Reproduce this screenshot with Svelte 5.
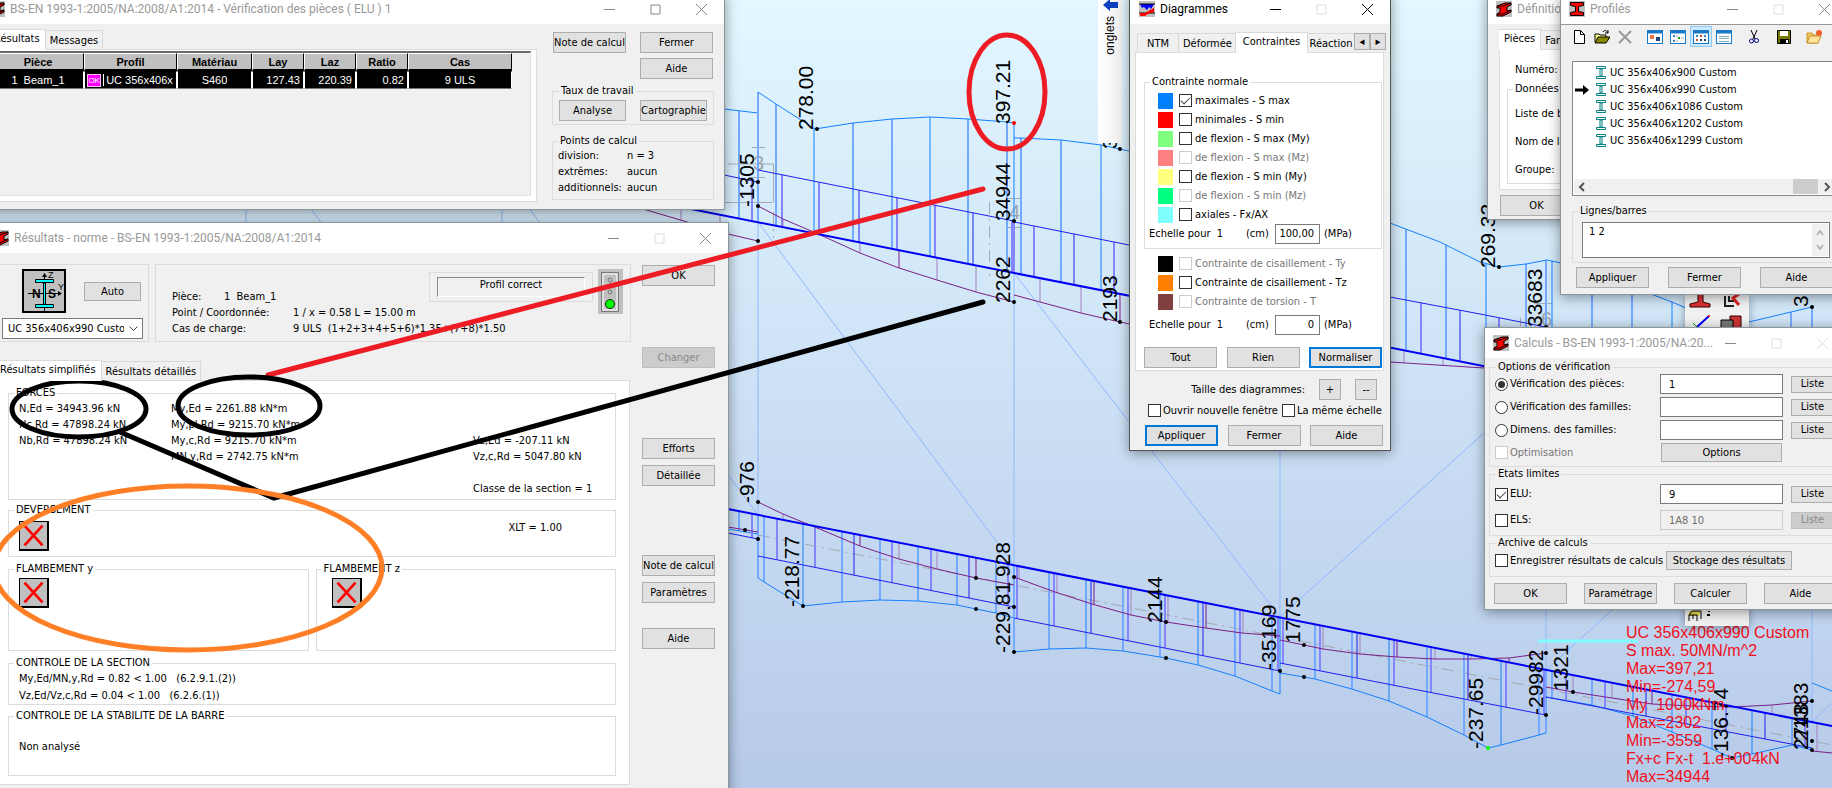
<script lang="ts">
	type Point = [number, number];
	type Curve = { kind: string; chord: 'top' | 'bottom'; points: Point[]; ribs: number[] };

	// s = contrainte maximale, n = effort axial, m = moment
	const curves: Curve[] = [
		{ kind: 's', chord: 'top', points: [[724, 109], [758, 113]], ribs: [739] },
		{ kind: 's', chord: 'top', points: [[758, 92], [776, 104], [815, 129], [853, 123], [892, 119], [930, 117], [968, 119], [1007, 122], [1014, 123]], ribs: [758, 776, 814, 853, 892, 930, 968, 1007, 1014] },
		{ kind: 's', chord: 'top', points: [[1014, 138], [1021, 138], [1061, 140], [1101, 145], [1129, 151], [1260, 182], [1390, 223], [1440, 242], [1480, 262], [1499, 267], [1526, 264], [1547, 260], [1561, 263], [1651, 294], [1672, 302], [1686, 308]], ribs: [1021, 1061, 1101, 1406, 1446, 1486, 1526, 1546, 1552, 1592, 1632, 1672] },
		{ kind: 's', chord: 'top', points: [[1749, 322], [1791, 312], [1812, 307]], ribs: [1791, 1812] },
		{ kind: 'n', chord: 'top', points: [[724, 175], [758, 182]], ribs: [752] },
		{ kind: 'n', chord: 'top', points: [[758, 170], [1014, 221]], ribs: [782, 819, 859, 897, 935, 973, 1012] },
		{ kind: 'n', chord: 'top', points: [[1014, 222], [1129, 245], [1390, 297], [1480, 314], [1546, 327]], ribs: [1014, 1034, 1074, 1114, 1421, 1460, 1499, 1540] },
		{ kind: 'm', chord: 'top', points: [[643, 209], [728, 234], [758, 241]], ribs: [681, 720] },
		{ kind: 'm', chord: 'top', points: [[758, 206], [783, 219], [816, 233], [860, 253], [899, 268], [937, 280], [976, 292], [1014, 302]], ribs: [783, 860, 899, 937, 976] },
		{ kind: 'm', chord: 'top', points: [[1014, 295], [1040, 302], [1081, 313], [1120, 322], [1160, 330], [1390, 362], [1484, 368]], ribs: [1040, 1081, 1120, 1404, 1443] },
		{ kind: 's', chord: 'bottom', points: [[728, 529], [758, 534]], ribs: [739] },
		{ kind: 's', chord: 'bottom', points: [[758, 578], [764, 582], [803, 606], [842, 602], [880, 600], [918, 601], [957, 605], [976, 609], [996, 613], [1014, 618]], ribs: [758, 764, 803, 842, 880, 918, 957, 996] },
		{ kind: 's', chord: 'bottom', points: [[1014, 652], [1049, 649], [1086, 648], [1123, 651], [1166, 658], [1198, 665], [1235, 676], [1272, 691], [1280, 694]], ribs: [1014, 1049, 1086, 1123, 1160, 1198, 1235, 1272, 1280] },
		{ kind: 's', chord: 'bottom', points: [[1280, 673], [1304, 677], [1315, 679], [1352, 689], [1389, 701], [1427, 717], [1464, 735], [1488, 748], [1501, 745], [1539, 735], [1546, 733]], ribs: [1315, 1352, 1389, 1427, 1464, 1501, 1539, 1546] },
		{ kind: 's', chord: 'bottom', points: [[1546, 697], [1552, 698], [1592, 705], [1633, 716], [1672, 732], [1712, 749], [1732, 758], [1752, 754], [1792, 745], [1812, 750]], ribs: [1552, 1592, 1633, 1672, 1712, 1752, 1792] },
		{ kind: 's', chord: 'bottom', points: [[1812, 683], [1832, 691]], ribs: [] },
		{ kind: 'n', chord: 'bottom', points: [[728, 533], [758, 539]], ribs: [752] },
		{ kind: 'n', chord: 'bottom', points: [[758, 556], [1014, 607]], ribs: [777, 815, 854, 892, 931, 969, 1008] },
		{ kind: 'n', chord: 'bottom', points: [[1014, 618], [1280, 671]], ribs: [1017, 1054, 1091, 1128, 1165, 1203, 1240, 1278] },
		{ kind: 'n', chord: 'bottom', points: [[1280, 663], [1546, 715]], ribs: [1283, 1320, 1357, 1394, 1431, 1468, 1506, 1544] },
		{ kind: 'n', chord: 'bottom', points: [[1546, 697], [1812, 748]], ribs: [1566, 1605, 1646, 1686, 1726, 1765, 1805] },
		{ kind: 'm', chord: 'bottom', points: [[728, 527], [758, 532]], ribs: [] },
		{ kind: 'm', chord: 'bottom', points: [[758, 502], [783, 514], [822, 530], [860, 546], [899, 559], [937, 569], [976, 578], [1014, 585]], ribs: [783, 822, 860, 899, 937, 976] },
		{ kind: 'm', chord: 'bottom', points: [[1014, 577], [1055, 592], [1092, 604], [1131, 615], [1166, 622], [1206, 628], [1242, 633], [1280, 636]], ribs: [1019, 1057, 1094, 1131, 1168, 1206, 1243] },
		{ kind: 'm', chord: 'bottom', points: [[1280, 640], [1304, 645], [1323, 649], [1360, 654], [1397, 657], [1435, 659], [1471, 659], [1509, 658], [1546, 653]], ribs: [1323, 1360, 1397, 1435, 1471, 1509] },
		{ kind: 'm', chord: 'bottom', points: [[1546, 687], [1573, 692], [1612, 698], [1652, 704], [1692, 706], [1732, 707], [1772, 705], [1812, 701]], ribs: [1573, 1612, 1652, 1692, 1772] },
		{ kind: 'm', chord: 'bottom', points: [[1812, 751], [1832, 753]], ribs: [1817] }
	];

	const chordY = (chord: string, x: number) =>
		chord === 'top' ? 222 + (x - 758) * 0.198 : 515 + (x - 758) * 0.1964;

	function curveY(points: Point[], x: number) {
		for (let i = 1; i < points.length; i++) {
			const [x0, y0] = points[i - 1];
			const [x1, y1] = points[i];
			if (x <= x1) return y0 + ((x - x0) / (x1 - x0)) * (y1 - y0);
		}
		return points[points.length - 1][1];
	}

	const bracing = [
		[246, 200, 246, 230], [502, 172, 502, 230], [300, 195, 340, 247], [502, 172, 758, 515],
		[758, 222, 758, 515], [758, 222, 1014, 565], [1014, 273, 1014, 565], [1014, 273, 1280, 617],
		[1280, 325, 1280, 617], [1280, 617, 1546, 377], [1546, 377, 1546, 670], [1546, 670, 1812, 430],
		[1812, 430, 1812, 722], [1812, 722, 1832, 703]
	];

	const dots: Point[] = [
		[817, 129], [758, 182], [758, 206], [758, 241], [1014, 221], [1014, 302], [1120, 149], [1120, 322],
		[1499, 267], [1546, 327], [1812, 307], [758, 502], [745, 530], [758, 539], [803, 606], [976, 578],
		[976, 609], [1014, 577], [1014, 607], [1014, 652], [1166, 622], [1166, 658], [1280, 671], [1304, 645],
		[1304, 677], [1546, 653], [1546, 715], [1573, 692], [1732, 758], [1812, 701], [1812, 741], [1812, 750]
	];

	const values: [string, number, number][] = [
		['278.00', 813, 130], ['397.21', 1010, 124], ['34944', 1010, 221], ['2262', 1010, 303],
		['2193', 1117, 322], ['3', 1117, 149], ['-1305', 754, 207], ['-976', 754, 503],
		['-218.77', 799, 607], ['-229.81', 1010, 653], ['928', 1010, 577], ['2144', 1162, 623],
		['-35169', 1276, 670], ['1775', 1300, 643], ['-29982', 1543, 715], ['1321', 1568, 691],
		['-237.65', 1483, 749], ['-136.74', 1728, 759], ['21383', 1808, 741], ['2748', 1808, 750],
		['269.32', 1495, 268], ['33683', 1542, 327], ['3', 1808, 307]
	];

	const legend = [
		'UC 356x406x990 Custom', 'S max. 50MN/m^2', 'Max=397,21', 'Min=-274,59', 'My  1000kNm',
		'Max=2302', 'Min=-3559', 'Fx+c Fx-t  1.e+004kN', 'Max=34944'
	];

	const columns = ['Pièce', 'Profil', 'Matériau', 'Lay', 'Laz', 'Ratio', 'Cas'];

	const forces = [
		['N,Ed = 34943.96 kN', 'My,Ed = 2261.88 kN*m', ''],
		['Nc,Rd = 47898.24 kN', 'My,pl,Rd = 9215.70 kN*m', ''],
		['Nb,Rd = 47898.24 kN', 'My,c,Rd = 9215.70 kN*m', 'Vz,Ed = -207.11 kN'],
		['', 'MN,y,Rd = 2742.75 kN*m', 'Vz,c,Rd = 5047.80 kN'],
		['', '', ''],
		['', '', 'Classe de la section = 1']
	];

	const normal = [
		{ color: '#0080ff', label: 'maximales - S max', checked: true, disabled: false },
		{ color: '#ff0000', label: 'minimales - S min', checked: false, disabled: false },
		{ color: '#80ff80', label: 'de flexion - S max (My)', checked: false, disabled: false },
		{ color: '#ff8080', label: 'de flexion - S max (Mz)', checked: false, disabled: true },
		{ color: '#ffff80', label: 'de flexion - S min (My)', checked: false, disabled: false },
		{ color: '#00ff80', label: 'de flexion - S min (Mz)', checked: false, disabled: true },
		{ color: '#80ffff', label: 'axiales - Fx/AX', checked: false, disabled: false }
	];
	const shear = [
		{ color: '#000000', label: 'Contrainte de cisaillement - Ty', checked: false, disabled: true },
		{ color: '#ff8000', label: 'Contrainte de cisaillement - Tz', checked: false, disabled: false },
		{ color: '#804040', label: 'Contrainte de torsion - T', checked: false, disabled: true }
	];

	const profiles = ['900', '990', '1086', '1202', '1299'];
	const targets = [
		{ label: 'Vérification des pièces:', value: '1' },
		{ label: 'Vérification des familles:', value: '' },
		{ label: 'Dimens. des familles:', value: '' }
	];
</script>

{#snippet beam()}
	<svg class="icon" viewBox="0 0 16 16" aria-hidden="true">
		<rect width="16" height="16" fill="#c0c0c0" />
		<path d="M1 5 9 2h6v2l-4 2v4l4-1v2l-8 4H1v-2l3-2V7L1 7z" fill="#f00" stroke="#000" />
		<path d="M1 5h6l8-3M1 13h6l8-4" fill="none" stroke="#000" />
	</svg>
{/snippet}

{#snippet isection()}
	<svg class="icon" viewBox="0 0 16 16" aria-hidden="true">
		<rect width="16" height="16" fill="#c0c0c0" />
		<path d="M1.500 1.500h13v3l-5 1v5l5 1v3h-13v-3l5-1v-5l-5-1z" fill="#f00" stroke="#000" />
	</svg>
{/snippet}

{#snippet diagramIcon()}
	<svg class="icon" viewBox="0 0 16 16" aria-hidden="true">
		<rect width="16" height="16" fill="#c0c0c0" />
		<path d="M1 3h14l-3 5-2-2-2 3-3-3-2 1z" fill="#00f" />
		<path d="M0 3h16M0 12h16" stroke="#000" />
		<path d="M1 15v-3h5l7-4 2-1v4l-6 2-3 2z" fill="#f00" />
	</svg>
{/snippet}

{#snippet titlebar(icon: any, title: string, look: string)}
	<header class="titlebar {look}">
		{@render icon()}
		<h2>{title}</h2>
		<button class="ctl" aria-label="Réduire"><svg viewBox="0 0 11 11"><path d="M0 5.500h11" /></svg></button>
		<button class="ctl max" aria-label="Agrandir"><svg viewBox="0 0 11 11"><path d="M1 1h9v9H1z" /></svg></button>
		<button class="ctl close" aria-label="Fermer la fenêtre"><svg viewBox="0 0 11 11"><path d="M0 0l11 11M11 0 0 11" /></svg></button>
	</header>
{/snippet}

{#snippet cross(label: string)}
	<button class="cross" aria-label={label}>
		<svg viewBox="0 0 30 30"><path d="M5 4l20 22M25 4 5 26" stroke="#f00" stroke-width="3" /></svg>
	</button>
{/snippet}

{#snippet stress(row: any)}
	<label class="stress" class:off={row.disabled}>
		<span class="swatch" style="background: {row.color}"></span>
		<input type="checkbox" checked={row.checked} disabled={row.disabled} />
		{row.label}
	</label>
{/snippet}

<main class="desktop">
	<svg class="scene" aria-hidden="true">
		<g class="brace">
			{#each bracing as [x1, y1, x2, y2]}
				<line {x1} {y1} {x2} {y2} />
			{/each}
		</g>
		<path class="axis" d="M728 164h45M773.500 164v38M720 202.500h53M752 147.500h13M752 177.500h13M1008 198.500h13M1008 227.500h13M1534 303.500h18M1520.500 318v8" />
		<path class="axis dashed" d="M773.500 212v26M989.500 202v74M758 535 1832 745" />
		<text class="node" x="753" y="170">3</text>
		<text class="node" x="1009" y="219">4</text>
		<text class="node" x="1541" y="326">6</text>
		{#each curves as curve}
			<g class={curve.kind}>
				{#each curve.ribs as x, i}
					<line class:pale={i % 3 !== 2} x1={x} x2={x} y1={chordY(curve.chord, x)} y2={curveY(curve.points, x)} />
				{/each}
				<polyline points={curve.points.map((p) => p.join(',')).join(' ')} />
			</g>
		{/each}
		<path class="chord" d="M600 191 1832 435M728 509 1832 726" />
		<path d="M1538 641h100" stroke="#7fffff" stroke-width="3" />
		{#each dots as [cx, cy]}
			<circle {cx} {cy} r="2" />
		{/each}
		<circle cx="1014" cy="123" r="2" fill="#f00" />
		<circle cx="1488" cy="748" r="2" fill="#0f0" />
		<g class="values">
			{#each values as [text, x, y]}
				<text transform="translate({x} {y}) rotate(-90)">{text}</text>
			{/each}
		</g>
	</svg>

	<div class="legend">
		{#each legend as line}<p>{line}</p>{/each}
	</div>

	<aside class="dock">
		<svg width="15" height="12" viewBox="0 0 15 12" aria-hidden="true"><path d="M0 5 7-1v3h8v6H7v3z" fill="#0a3fc0" /></svg>
		<span>onglets</span>
	</aside>

	<div class="palette">
		<svg width="64" height="34" viewBox="0 0 64 34" aria-hidden="true">
			<path d="M13 0h5v8l7 2v3H5v-3l8-2z" fill="#d33" stroke="#300" />
			<path d="M40 2v10h9M44 2v5h5" fill="none" stroke="#222" stroke-width="2" />
			<path d="M54 0l-6 4 6 7" fill="none" stroke="#d22" stroke-width="3" />
			<path d="M12 33l12-11" stroke="#00f" stroke-width="2" />
			<path d="M8 29l4 4" stroke="#090" />
			<circle cx="24" cy="22" r="1" fill="#f00" />
			<path d="M45 22h11v12H45z" fill="#c33" stroke="#300" />
			<path d="M36 26h12v8H36z" fill="#777" stroke="#000" />
		</svg>
		<svg class="last" width="64" height="16" viewBox="0 0 64 16" aria-hidden="true">
			<path d="M5 1h11l-2 5H3z" fill="#e8dc50" />
			<path d="M4 11V5h8v6M8 5v4M4 5l3-4h9v8" fill="none" stroke="#000" />
			<path d="M22 4h3v2h-3zM23 1h2v1h-2z" />
		</svg>
	</div>

	<section class="window verification">
		{@render titlebar(beam, 'BS-EN 1993-1:2005/NA:2008/A1:2014 - Vérification des pièces ( ELU ) 1', '')}
		<div class="body">
			<div class="left">
				<div class="tabs"><button class="tab on">Résultats</button><button class="tab">Messages</button></div>
				<div class="pane">
					<div class="sheet">
						<table>
							<thead><tr>{#each columns as column}<th>{column}</th>{/each}</tr></thead>
							<tbody>
								<tr>
									<td>1&nbsp; Beam_1</td>
									<td class="profile"><b>OK</b><span>UC 356x406x</span></td>
									<td>S460</td>
									<td class="num">127.43</td>
									<td class="num">220.39</td>
									<td class="num">0.82</td>
									<td>9 ULS</td>
								</tr>
							</tbody>
						</table>
					</div>
				</div>
			</div>
			<div class="right">
				<div class="pair"><button>Note de calcul</button><button>Fermer</button></div>
				<div class="pair second"><button>Aide</button></div>
				<fieldset class="rate">
					<legend>Taux de travail</legend>
					<button>Analyse</button><button>Cartographie</button>
				</fieldset>
				<fieldset class="stations">
					<legend>Points de calcul</legend>
					<span>division:</span><span>n = 3</span>
					<span>extrêmes:</span><span>aucun</span>
					<span>additionnels:</span><span>aucun</span>
				</fieldset>
			</div>
		</div>
	</section>

	<section class="window results">
		{@render titlebar(beam, 'Résultats - norme - BS-EN 1993-1:2005/NA:2008/A1:2014', 'nomax')}
		<div class="body">
			<div class="content">
				<div class="summary">
					<div class="box section">
						<svg width="44" height="44" viewBox="0 0 44 44" aria-hidden="true">
							<rect x="1" y="1" width="42" height="42" fill="#c0c0c0" stroke="#000" stroke-width="2" />
							<path d="M6 24.500h33M22.500 5v37" stroke="#000" />
							<path d="M13.500 10.500h18v3h-18zM13.500 35.500h18v3h-18zM21.500 14h2v21h-2z" fill="#0ff" stroke="#000" />
							<path d="M20 8l2.500-4L25 8zM36 22l4 2.500-4 2.500z" />
							<text x="10" y="29">N</text><text x="26" y="29">S</text>
							<text class="small" x="26" y="9">Z</text><text class="small" x="36" y="21">Y</text>
						</svg>
						<button>Auto</button>
						<select aria-label="Profil"><option>UC 356x406x990 Custom</option></select>
					</div>
					<div class="box piece">
						<dl>
							<dt>Pièce:</dt><dd class="name">1&nbsp; Beam_1</dd>
							<dt>Point / Coordonnée:</dt><dd>1 / x = 0.58 L = 15.00 m</dd>
							<dt>Cas de charge:</dt><dd>9 ULS&nbsp; (1+2+3+4+5+6)*1.35+(7+8)*1.50</dd>
						</dl>
						<div class="verdict"><output>Profil correct</output></div>
						<svg width="25" height="45" viewBox="0 0 25 45" aria-hidden="true">
							<rect width="25" height="45" fill="#c0c0c0" />
							<path d="M3.500 3.500h17v39h-17z" fill="none" stroke="#777" />
							<path d="M5 5h14v36H5z" fill="#c0c0c0" stroke="#fff" />
							<circle cx="12" cy="11" r="2" fill="none" stroke="#777" />
							<circle cx="12" cy="23" r="2" fill="none" stroke="#777" />
							<circle cx="12" cy="35" r="4.500" fill="#0f0" stroke="#030" />
						</svg>
					</div>
				</div>
				<div class="tabs"><button class="tab on">Résultats simplifiés</button><button class="tab">Résultats détaillés</button></div>
				<div class="pane">
					<fieldset class="forces">
						<legend>FORCES</legend>
						{#each forces as row}{#each row as cell}<span>{cell}</span>{/each}{/each}
					</fieldset>
					<fieldset class="lateral">
						<legend>DEVERSEMENT</legend>
						{@render cross('Déversement')}<span>XLT = 1.00</span>
					</fieldset>
					<div class="buckling">
						<fieldset><legend>FLAMBEMENT y</legend>{@render cross('Flambement y')}</fieldset>
						<fieldset class="weak"><legend>FLAMBEMENT z</legend>{@render cross('Flambement z')}</fieldset>
					</div>
					<fieldset class="control">
						<legend>CONTROLE DE LA SECTION</legend>
						<p>My,Ed/MN,y,Rd = 0.82 &lt; 1.00 &nbsp; (6.2.9.1.(2))</p>
						<p>Vz,Ed/Vz,c,Rd = 0.04 &lt; 1.00 &nbsp; (6.2.6.(1))</p>
					</fieldset>
					<fieldset class="stability">
						<legend>CONTROLE DE LA STABILITE DE LA BARRE</legend>
						<p>Non analysé</p>
					</fieldset>
				</div>
			</div>
			<div class="actions">
				<button>OK</button><button disabled>Changer</button><button>Efforts</button><button>Détaillée</button>
				<button>Note de calcul</button><button>Paramètres</button><button>Aide</button>
			</div>
		</div>
	</section>

	<section class="window diagrams">
		{@render titlebar(diagramIcon, 'Diagrammes', 'active nomax')}
		<div class="tabs">
			<button class="tab">NTM</button><button class="tab">Déformée</button><button class="tab on">Contraintes</button><button class="tab last">Réaction</button>
			<button class="scroll" aria-label="Onglet précédent">◂</button><button class="scroll" aria-label="Onglet suivant">▸</button>
		</div>
		<div class="pane">
			<fieldset>
				<legend>Contrainte normale</legend>
				{#each normal as row}{@render stress(row)}{/each}
				<label class="scale"><span>Echelle pour&nbsp; 1</span><span>(cm)</span><input value="100,00" /><span>(MPa)</span></label>
			</fieldset>
			<div class="shear">
				{#each shear as row}{@render stress(row)}{/each}
				<label class="scale"><span>Echelle pour&nbsp; 1</span><span>(cm)</span><input value="0" /><span>(MPa)</span></label>
			</div>
			<div class="buttons"><button>Tout</button><button>Rien</button><button class="focus">Normaliser</button></div>
		</div>
		<div class="size">Taille des diagrammes:<button>+</button><button>--</button></div>
		<div class="checks">
			<label><input type="checkbox" />Ouvrir nouvelle fenêtre</label>
			<label><input type="checkbox" />La même échelle</label>
		</div>
		<div class="buttons bottom"><button class="focus">Appliquer</button><button>Fermer</button><button>Aide</button></div>
	</section>

	<section class="window definition">
		{@render titlebar(beam, 'Définitions', '')}
		<div class="tabs"><button class="tab on">Pièces</button><button class="tab">Familles</button></div>
		<div class="pane">
			<p>Numéro:</p>
			<fieldset>
				<legend>Données de base</legend>
				<p>Liste de barres:</p>
				<p>Nom de la pièce:</p>
				<p>Groupe:</p>
			</fieldset>
		</div>
		<button>OK</button>
	</section>

	<section class="window profiles">
		{@render titlebar(isection, 'Profilés', 'nomax')}
		<div class="toolbar">
			<div>
				<button aria-label="Nouveau"><svg viewBox="0 0 16 16"><path d="M3.500 1.500h6l4 4v9h-10zM9.500 1.500v4h4" fill="#fff" stroke="#000" /></svg></button>
				<button aria-label="Ouvrir"><svg viewBox="0 0 16 16"><path d="M1 13V5h4l1 1h6v2" fill="#ff8" stroke="#000" /><path d="M1 14l3-6h12l-4 6z" fill="#880" stroke="#000" /><path d="M9 3c2-3 4-1 5 1m0-3v3h-3" fill="none" stroke="#000" /></svg></button>
				<button aria-label="Supprimer"><svg viewBox="0 0 16 16"><path d="M2 2l12 12M14 2 2 14" stroke="#999" stroke-width="2" /></svg></button>
			</div>
			<div>
				<button aria-label="Grandes icônes"><svg viewBox="0 0 16 16"><rect x=".5" y="1.500" width="15" height="13" fill="#fff" stroke="#1979c9" /><path d="M1 3h14" stroke="#1979c9" stroke-width="3" /><path d="M3 6h4v4H3z" fill="#e74" /><path d="M9 8h4v4H9z" fill="#247" /></svg></button>
				<button aria-label="Petites icônes"><svg viewBox="0 0 16 16"><rect x=".5" y="1.500" width="15" height="13" fill="#fff" stroke="#1979c9" /><path d="M1 3h14" stroke="#1979c9" stroke-width="3" /><path d="M3 6h2v2H3zM3 11h2v2H3z" fill="#38c" /><path d="M8 8h2v2H8z" fill="#190" /><path d="M11 9h3M6 7h2M6 12h2" stroke="#aaa" /></svg></button>
				<button class="on" aria-label="Liste"><svg viewBox="0 0 16 16"><rect x=".5" y="1.500" width="15" height="13" fill="#fff" stroke="#1979c9" /><path d="M1 3h14" stroke="#1979c9" stroke-width="3" /><path d="M3 7h2M11 7h2" stroke="#38c" stroke-width="2" /><path d="M3 11h2M7 7h2" stroke="#d52" stroke-width="2" /><path d="M7 11h2M11 11h2" stroke="#247" stroke-width="2" /></svg></button>
				<button aria-label="Détails"><svg viewBox="0 0 16 16"><rect x=".5" y="1.500" width="15" height="13" fill="#fff" stroke="#1979c9" /><path d="M1 3h14" stroke="#1979c9" stroke-width="3" /><path d="M3 7.500h10M3 9.500h10M3 12.500h10" stroke="#8ab" /></svg></button>
			</div>
			<button aria-label="Couper"><svg viewBox="0 0 16 16"><path d="M5 1l4 9M11 1 7 10" fill="none" stroke="#000" /><circle cx="5.500" cy="12" r="2" fill="none" stroke="#008" /><circle cx="10.500" cy="11.500" r="2" fill="none" stroke="#008" /></svg></button>
			<button aria-label="Enregistrer"><svg viewBox="0 0 16 16"><path d="M1.500 1.500h13v13h-13z" fill="#770" stroke="#000" /><path d="M4 2h8v5H4z" fill="#fff" /><path d="M4 10h9v4H4z" /><path d="M10 11h2v3h-2z" fill="#fff" /></svg></button>
			<button aria-label="Nouveau dossier"><svg viewBox="0 0 16 16"><path d="M1 4h5l1 2h5v8H1z" fill="#f3c45b" stroke="#c8912c" /><path d="M1 14l3-7h11l-3 7z" fill="#ffe39a" stroke="#c8912c" /><circle cx="13" cy="4" r="3" fill="#f0602c" /></svg></button>
		</div>
		<div class="list">
			<ul>
				{#each profiles as size}
					<li>
						<span>{#if size === '990'}<svg width="14" height="10" viewBox="0 0 14 10" aria-hidden="true"><path d="M0 3.500h8V0l6 5-6 5V6.500H0z" /></svg>{/if}</span>
						<svg width="10" height="13" viewBox="0 0 10 13" aria-hidden="true"><path d="M.5.500h9v2h-9zM.5 10.500h9v2h-9zM4 3v7h2V3z" fill="#fff" stroke="#008080" /></svg>
						UC 356x406x{size} Custom
					</li>
				{/each}
			</ul>
			<div class="hscroll">
				<svg width="8" height="10" viewBox="0 0 8 10"><path d="M6 1 2 5l4 4" /></svg><i></i>
				<svg width="8" height="10" viewBox="0 0 8 10"><path d="M2 1l4 4-4 4" /></svg>
			</div>
		</div>
		<fieldset>
			<legend>Lignes/barres</legend>
			<div class="memo">
				<textarea aria-label="Lignes/barres">1 2</textarea>
				<div><svg width="8" height="6" viewBox="0 0 8 6"><path d="M1 5l3-4 3 4" /></svg><svg width="8" height="6" viewBox="0 0 8 6"><path d="M1 1l3 4 3-4" /></svg></div>
			</div>
		</fieldset>
		<div class="buttons"><button>Appliquer</button><button>Fermer</button><button>Aide</button></div>
	</section>

	<section class="window calculations">
		{@render titlebar(beam, 'Calculs - BS-EN 1993-1:2005/NA:20...', 'nomax noclose')}
		<fieldset>
			<legend>Options de vérification</legend>
			{#each targets as target, i}
				<label><input type="radio" name="target" checked={i === 0} />{target.label}</label>
				<input type="text" aria-label={target.label} value={target.value} />
				<button class="list-button">Liste</button>
			{/each}
			<label class="off"><input type="checkbox" disabled />Optimisation</label>
			<button class="wide">Options</button>
		</fieldset>
		<fieldset class="limits">
			<legend>Etats limites</legend>
			<label><input type="checkbox" checked />ELU:</label>
			<input type="text" aria-label="Cas ELU" value="9" />
			<button class="list-button">Liste</button>
			<label><input type="checkbox" />ELS:</label>
			<input type="text" aria-label="Cas ELS" value="1A8 10" disabled />
			<button class="list-button" disabled>Liste</button>
		</fieldset>
		<fieldset class="archive">
			<legend>Archive de calculs</legend>
			<label><input type="checkbox" />Enregistrer résultats de calculs</label>
			<button class="wide">Stockage des résultats</button>
		</fieldset>
		<div class="buttons"><button>OK</button><button>Paramétrage</button><button>Calculer</button><button>Aide</button></div>
	</section>

	<svg class="scene notes" aria-hidden="true">
		<path d="M268 375 983 189" stroke="#ed1c24" />
		<ellipse cx="1007" cy="92" rx="38" ry="57" stroke="#ed1c24" />
		<ellipse cx="79" cy="409" rx="67" ry="28" stroke="#000" />
		<ellipse cx="249" cy="406" rx="71" ry="29" stroke="#000" />
		<path d="M120 432 274 498 983 302" stroke="#000" />
		<ellipse cx="188" cy="568" rx="194" ry="82" stroke="#ff7f27" />
	</svg>
</main>

<style>
	:global(body) {
		margin: 0;
	}
	.desktop {
		position: relative;
		height: 100vh;
		overflow: hidden;
		background: linear-gradient(#e2f7ff, #cce1f5 50%, #b6cae9);
		font: 11px/14px 'DejaVu Sans Condensed', 'Noto Sans', sans-serif;
		color: #000;
	}
	.desktop * {
		box-sizing: border-box;
	}
	p,
	h2,
	ul,
	dl,
	dd {
		margin: 0;
		padding: 0;
	}

	/* scène 3D */
	.scene {
		position: absolute;
		inset: 0;
		width: 100%;
		height: 100%;
	}
	.scene line,
	.scene polyline,
	.scene path {
		fill: none;
	}
	.brace line {
		stroke: #8fb8ff;
	}
	.s {
		stroke: #1480ff;
	}
	.s .pale {
		stroke: #75a9ff;
		stroke-width: 2;
	}
	.n {
		stroke: #2020f0;
	}
	.n .pale {
		stroke: #8585ff;
		stroke-width: 2;
	}
	.m {
		stroke: #7c1f86;
	}
	.m .pale {
		stroke: #a381c0;
	}
	.chord {
		stroke: #0000f5;
		stroke-width: 2;
	}
	.axis {
		stroke: #a4a9ad;
	}
	.dashed {
		stroke-dasharray: 12 5 2 5;
	}
	.node {
		font: 20px 'Liberation Sans', sans-serif;
		fill: #a0a4a8;
	}
	.values {
		font: 21px 'Liberation Sans', sans-serif;
		fill: #000;
	}
	.notes {
		pointer-events: none;
		fill: none;
		stroke-width: 5;
		stroke-linecap: round;
	}
	.legend {
		position: absolute;
		left: 1626px;
		top: 624px;
		font: 16px/18px 'Liberation Sans', sans-serif;
		color: #f01020;
		white-space: pre;
	}
	.dock {
		position: absolute;
		left: 1098px;
		top: 0;
		width: 24px;
		height: 143px;
		display: flex;
		flex-direction: column;
		align-items: center;
		gap: 4px;
		background: linear-gradient(90deg, #fff, #f0f0f0);
		font: 12px/14px 'Liberation Sans', sans-serif;
	}
	.dock span {
		writing-mode: vertical-rl;
		transform: rotate(180deg);
	}
	.palette {
		position: absolute;
		left: 1685px;
		top: 294px;
		width: 64px;
		height: 332px;
		display: flex;
		flex-direction: column;
		justify-content: space-between;
		background: #f2f2f2;
		box-shadow: 0 2px 8px rgba(0, 0, 0, 0.35);
	}

	/* fenêtres */
	.window {
		position: absolute;
		display: flex;
		flex-direction: column;
		background: #f0f0f0;
		border: 1px solid #8b959c;
		box-shadow: 0 2px 12px rgba(0, 0, 0, 0.4);
		white-space: nowrap;
	}
	.titlebar {
		display: flex;
		align-items: center;
		height: 30px;
		padding-left: 10px;
		background: #fff;
		color: #999;
	}
	.titlebar h2 {
		flex: 1;
		min-width: 0;
		margin-left: 5px;
		font: 12px/16px Roboto, 'Noto Sans', sans-serif;
	}
	.active h2 {
		color: #000;
	}
	.icon {
		flex: none;
		width: 16px;
		height: 16px;
	}
	.titlebar .ctl {
		flex: none;
		width: 46px;
		height: 30px;
		border: 0;
		background: none;
	}
	.ctl svg {
		display: block;
		width: 11px;
		height: 11px;
		margin: auto;
		fill: none;
		stroke: #888;
		overflow: visible;
	}
	.active .ctl svg {
		stroke: #000;
	}
	.nomax .max svg,
	.noclose .close svg {
		stroke: #ddd;
	}
	button {
		height: 21px;
		margin: 0;
		padding: 0;
		border: 1px solid #adadad;
		border-radius: 0;
		background: #e1e1e1;
		color: #000;
		font: inherit;
		white-space: nowrap;
	}
	button:disabled {
		background: #ccc;
		border-color: #bfbfbf;
		color: #888;
	}
	.focus {
		border: 2px solid #0078d7;
	}
	fieldset {
		min-width: 0;
		margin: 0;
		padding: 0;
		border: 1px solid #dcdcdc;
	}
	legend {
		margin-left: 5px;
		padding: 0 2px;
		line-height: 14px;
	}
	.tabs {
		display: flex;
		align-items: flex-end;
	}
	.tab {
		height: 19px;
		padding: 2px 4px 0;
		border-color: #d9d9d9;
		border-bottom: 0;
		border-left: 0;
		background: #f0f0f0;
	}
	.tab.on {
		height: 21px;
		margin-bottom: -1px;
		padding: 0 5px 2px;
		background: #fff;
		z-index: 1;
	}
	.pane {
		border: 1px solid #dcdcdc;
		background: #fff;
	}
	input,
	select,
	textarea {
		margin: 0;
		border: 1px solid #7a7a7a;
		border-radius: 0;
		background: #fff;
		color: #000;
		font: inherit;
	}
	input:disabled {
		border-color: #ccc;
		background: #f0f0f0;
		color: #6d6d6d;
	}
	input[type='checkbox'],
	input[type='radio'] {
		appearance: none;
		flex: none;
		display: grid;
		place-content: center;
		width: 13px;
		height: 13px;
		border-color: #333;
	}
	input[type='checkbox']:disabled {
		border-color: #ccc;
		background: #fff;
	}
	input[type='radio'] {
		border-radius: 50%;
	}
	input[type='checkbox']:checked::before {
		content: '';
		width: 8px;
		height: 4px;
		margin-bottom: 2px;
		border: solid #444;
		border-width: 0 0 1px 1px;
		transform: rotate(-45deg);
	}
	input[type='radio']:checked::before {
		content: '';
		width: 7px;
		height: 7px;
		border-radius: 50%;
		background: #333;
	}
	.off {
		color: #777;
	}

	/* vérification des pièces */
	.verification {
		left: -22px;
		top: -7px;
		width: 747px;
	}
	.verification .body {
		display: flex;
		gap: 15px;
		padding: 5px 10px 7px 10px;
	}
	.verification legend {
		margin-left: 0;
	}
	.left {
		flex: 1;
	}
	.verification .pane {
		height: 153px;
		padding: 1px 5px 5px 1px;
	}
	.sheet {
		height: 100%;
		border: 1px solid #e0e0e0;
		border-top: 2px solid #696969;
		background: #f0f0f0;
	}
	table {
		table-layout: fixed;
		width: 520px;
		border-collapse: separate;
		border-spacing: 0;
		font: 11px/14px 'Liberation Sans', sans-serif;
	}
	th,
	td {
		height: 18px;
		padding: 0;
		border: 1px solid #000;
		border-left: 1px solid #fff;
		text-align: center;
	}
	th {
		border-top-color: #fff;
		border-bottom-width: 2px;
		background: #c0c0c0;
		font-weight: bold;
	}
	td {
		border-right-color: #fff;
		border-bottom: 1px solid #777;
		background: #000;
		color: #fff;
	}
	th:nth-child(1) {
		width: 92px;
	}
	th:nth-child(2) {
		width: 93px;
	}
	th:nth-child(3) {
		width: 75px;
	}
	th:nth-child(7) {
		width: 104px;
	}
	.num {
		padding-right: 3px;
		text-align: right;
	}
	.profile b {
		display: inline-block;
		width: 12px;
		margin-right: 3px;
		background: #f0f;
		font: 8px/11px 'Liberation Sans', sans-serif;
		outline: 1px solid #fbf;
		vertical-align: 1px;
	}
	.profile span {
		padding-left: 2px;
		border-left: 1px solid #fff;
	}
	.right {
		width: 162px;
		padding-top: 3px;
	}
	.pair {
		display: grid;
		grid-template-columns: 73px 73px;
		gap: 14px;
		padding-left: 1px;
	}
	.second {
		justify-content: end;
		grid-template-columns: 73px;
		padding-right: 1px;
		margin: 5px 0;
	}
	.rate {
		display: grid;
		grid-template-columns: 67px 67px;
		gap: 14px;
		padding: 2px 6px 3px;
	}
	.stations {
		display: grid;
		grid-template-columns: 69px 1fr;
		margin-top: 9px;
		padding: 0 5px 3px;
		line-height: 16px;
	}

	/* résultats */
	.results {
		left: -18px;
		top: 222px;
		width: 747px;
		min-height: 580px;
	}
	.results .body {
		display: flex;
		gap: 11px;
		padding: 11px 13px 14px 12px;
	}
	.content {
		flex: 1;
	}
	.summary {
		display: flex;
		gap: 6px;
		height: 78px;
		margin-bottom: 18px;
	}
	.box {
		border: 1px solid #dcdcdc;
	}
	.section {
		display: grid;
		grid-template-columns: 62px 57px;
		gap: 3px 0;
		width: 154px;
		padding: 4px 5px 0 6px;
		justify-content: start;
	}
	.section svg {
		margin-left: 20px;
	}
	.section text {
		font: bold 12px 'Liberation Sans', sans-serif;
	}
	.section .small {
		font: 9px 'Liberation Sans', sans-serif;
	}
	.section button {
		width: 57px;
		height: 19px;
		margin: 13px 0 0 20px;
	}
	.section select {
		grid-column: 1 / 3;
		appearance: none;
		width: 141px;
		height: 21px;
		padding: 0 18px 0 5px;
		background: #fff
			url("data:image/svg+xml,%3Csvg xmlns='http://www.w3.org/2000/svg' width='9' height='6'%3E%3Cpath d='M.5.5l4 4 4-4' fill='none' stroke='%23444'/%3E%3C/svg%3E")
			no-repeat right 4px center;
	}
	.piece {
		flex: 1;
		display: flex;
		align-items: flex-start;
		padding: 4px 7px 0 16px;
	}
	.piece svg {
		flex: none;
	}
	dl {
		display: grid;
		grid-template-columns: 121px auto;
		flex: 1;
		padding-top: 20px;
		line-height: 16px;
	}
	.name {
		margin-left: -69px;
	}
	.verdict {
		flex: none;
		width: 164px;
		height: 30px;
		margin: 3px 5px 0 -164px;
		padding: 4px 7px;
		border: 1px solid #dcdcdc;
	}
	.verdict output {
		display: block;
		height: 20px;
		border: 1px solid #888;
		border-right-color: #fff;
		border-bottom-color: #fff;
		text-align: center;
	}
	.results .pane {
		width: 635px;
		padding: 5px 13px 8px 12px;
	}
	.results legend {
		margin-left: -5px;
	}
	.forces {
		display: grid;
		grid-template-columns: 152px 302px auto;
		grid-auto-rows: 16px;
		align-items: center;
		padding: 1px 0 2px 10px;
	}
	.lateral {
		display: flex;
		justify-content: space-between;
		margin-top: 3px;
		padding: 4px 53px 5px 10px;
	}
	.buckling {
		display: grid;
		grid-template-columns: 1fr 1fr;
		gap: 7px;
		margin: 5px 0;
	}
	.buckling fieldset {
		padding: 2px 10px 42px;
	}
	.buckling .weak {
		padding-left: 15px;
	}
	.results .weak legend {
		margin-left: -10px;
	}
	.cross {
		display: block;
		width: 30px;
		height: 30px;
		border: 1px solid #000;
		border-right-width: 2px;
		border-bottom-width: 2px;
		background: #c0c0c0;
	}
	.cross svg {
		display: block;
		width: 100%;
	}
	.control {
		padding: 0 0 0 10px;
		line-height: 17px;
	}
	.stability {
		margin-top: 4px;
		padding: 17px 0 21px 10px;
	}
	.actions {
		display: grid;
		grid-template-columns: 73px;
		grid-template-rows: 82px 91px 27px 90px 27px 46px 21px;
		align-items: start;
		padding-top: 1px;
	}

	/* diagrammes */
	.diagrams {
		left: 1129px;
		top: -7px;
		width: 262px;
		border-color: #555;
	}
	.diagrams .titlebar {
		padding-left: 9px;
	}
	.diagrams .tabs {
		padding: 8px 3px 0 7px;
	}
	.diagrams .tab:first-child {
		width: 42px;
		border-left: 1px solid #d9d9d9;
	}
	.diagrams .tab:nth-child(2) {
		width: 57px;
	}
	.diagrams .tab.on {
		width: 72px;
	}
	.diagrams .last {
		width: 46px;
		padding: 2px 0 0;
		border-right: 0;
	}
	.diagrams .scroll {
		width: 16px;
		height: 17px;
		margin-bottom: 2px;
		line-height: 14px;
	}
	.diagrams .pane {
		margin: 0 6px 0 5px;
		padding: 22px 1px 2px 8px;
	}
	.diagrams fieldset {
		padding: 2px 0 4px;
	}
	.stress {
		display: flex;
		align-items: center;
		height: 19px;
		padding-left: 13px;
	}
	.swatch {
		width: 15px;
		height: 16px;
		margin-right: 6px;
	}
	.stress input {
		margin-right: 3px;
	}
	.scale {
		display: grid;
		grid-template-columns: 97px 29px 45px auto;
		align-items: center;
		height: 20px;
		padding-left: 4px;
	}
	.scale input {
		width: 45px;
		height: 20px;
		padding: 0 5px 2px 0;
		text-align: right;
	}
	.scale span:last-child {
		padding-left: 4px;
	}
	.shear {
		padding: 5px 0 0 1px;
	}
	.shear .scale {
		margin-top: 4px;
	}
	.buttons {
		display: flex;
	}
	.buttons button {
		width: 73px;
	}
	.diagrams .buttons {
		justify-content: space-between;
		margin-top: 12px;
	}
	.size {
		display: flex;
		align-items: center;
		justify-content: flex-end;
		margin-top: 8px;
		padding-right: 13px;
	}
	.size button {
		width: 22px;
		margin-left: 14px;
	}
	.checks {
		display: flex;
		gap: 4px;
		height: 14px;
		margin-top: 4px;
		padding-left: 18px;
	}
	.checks label {
		display: flex;
		gap: 2px;
	}
	.diagrams .bottom {
		margin: 7px 7px 4px 15px;
	}

	/* définitions */
	.definition {
		left: 1487px;
		top: -7px;
		width: 300px;
	}
	.definition .titlebar,
	.profiles .titlebar,
	.calculations .titlebar {
		padding-left: 8px;
	}
	.definition .tabs {
		padding: 5px 0 0 11px;
	}
	.definition .pane {
		height: 141px;
		margin: 0 11px 5px;
		padding: 13px 7px;
	}
	.definition .pane > p {
		padding: 0 8px 5px;
	}
	.definition fieldset {
		padding: 11px 0 6px 7px;
	}
	.definition legend {
		margin-left: -2px;
	}
	.definition fieldset p {
		margin-bottom: 14px;
	}
	.definition fieldset p:last-child {
		margin-bottom: 0;
	}
	.definition > button {
		width: 73px;
		margin: 0 12px 3px;
	}

	/* profilés */
	.profiles {
		left: 1560px;
		top: -7px;
		width: 288px;
	}
	.profiles .titlebar {
		height: 31px;
		border-bottom: 1px solid #999;
	}
	.toolbar {
		display: flex;
		gap: 8px;
		height: 36px;
		padding: 1px 7px;
	}
	.toolbar div {
		display: flex;
		gap: 1px;
	}
	.toolbar button {
		width: 22px;
		border: 0;
		background: none;
	}
	.toolbar .on {
		border: 1px solid #90c8f6;
		background: #cce8ff;
	}
	.toolbar svg {
		display: block;
		width: 16px;
		height: 16px;
		margin: auto;
	}
	.list {
		display: flex;
		flex-direction: column;
		justify-content: space-between;
		height: 135px;
		margin: 0 10px 0 11px;
		padding: 2px 1px 1px;
		border: 1px solid #828790;
		background: #fff;
	}
	li {
		display: grid;
		grid-template-columns: 17px 10px auto;
		align-items: center;
		justify-content: start;
		gap: 4px;
		height: 17px;
		padding-left: 1px;
	}
	li span {
		display: flex;
	}
	.hscroll {
		display: flex;
		align-items: center;
		justify-content: flex-end;
		height: 15px;
		padding: 0 4px;
		background: #f0f0f0;
	}
	.hscroll svg:first-child {
		margin-right: auto;
	}
	.hscroll i {
		width: 25px;
		height: 15px;
		margin-right: 5px;
		background: #cdcdcd;
	}
	.hscroll path,
	.memo path {
		fill: none;
		stroke: #555;
		stroke-width: 2;
	}
	.profiles fieldset {
		margin: 8px 10px 0 11px;
		padding: 4px 6px 4px 9px;
	}
	.profiles legend {
		margin-left: -4px;
	}
	.memo {
		display: flex;
		height: 36px;
		border: 1px solid #7a7a7a;
		background: #fff;
	}
	.memo textarea {
		flex: 1;
		padding: 2px 6px;
		border: 0;
		resize: none;
		overflow: hidden;
	}
	.memo div {
		display: flex;
		flex-direction: column;
		align-items: center;
		justify-content: space-between;
		width: 16px;
		margin: 1px;
		padding: 6px 0;
		background: #f0f0f0;
	}
	.memo path {
		stroke: #b5b5b5;
	}
	.profiles .buttons {
		gap: 19px;
		margin: 4px 0 6px 15px;
	}

	/* calculs */
	.calculations {
		left: 1484px;
		top: 327px;
		width: 362px;
	}
	.calculations fieldset {
		display: grid;
		grid-template-columns: 165px 123px 73px;
		gap: 3px 0;
		align-items: center;
		margin: 2px 4px 0;
		padding: 0 0 4px 5px;
	}
	.calculations legend {
		margin-left: 1px;
	}
	.calculations label {
		display: flex;
		align-items: center;
		gap: 2px;
	}
	.calculations input[type='text'] {
		width: 123px;
		height: 20px;
		padding: 0 8px;
	}
	.list-button {
		height: 17px;
		width: 43px;
		margin-left: 8px;
	}
	.wide {
		height: 19px;
		margin: 0 1px;
	}
	.calculations .limits {
		row-gap: 6px;
		margin-top: 0;
		padding: 3px 0 5px 5px;
	}
	.calculations .archive {
		grid-template-columns: 170px 128px;
		margin-top: 0;
		padding: 1px 0 6px 5px;
	}
	.calculations .buttons {
		gap: 17px;
		margin: 6px 0 5px 9px;
	}
</style>
